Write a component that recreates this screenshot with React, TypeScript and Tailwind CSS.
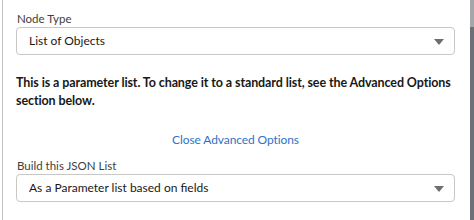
import { ReactNode } from "react";

const font = { fontFamily: 'Lato, "Segoe UI", sans-serif' };

function Select({ value }: { value: string }) {
  return (
    <div className="flex h-[28px] items-center justify-between rounded-[4px] border border-[#c9c7c5] bg-white pl-[12px] pr-[10px] text-[12px] text-[#181818]">
      <span>{value}</span>
      <svg width="10" height="6" viewBox="0 0 10 6" className="mt-[1px]">
        <path d="M0 0h10L5 6z" fill="#706e6b" />
      </svg>
    </div>
  );
}

function Field({ label, children }: { label: string; children: ReactNode }) {
  return (
    <div>
      <div className="h-[16px] pl-[1px] text-[11.5px] leading-[16px] text-[#3e3e3c]">{label}</div>
      <div>{children}</div>
    </div>
  );
}

export default function App() {
  return (
    <div className="flex h-[220px] w-[474px] overflow-hidden bg-white" style={font}>
      <div className="w-[2px] bg-white" />
      <div className="w-[1px] bg-[#c4c4c4]" />
      <div className="flex-1 pl-[13px] pr-[15px] pt-[11px]">
        <Field label="Node Type">
          <Select value="List of Objects" />
        </Field>

        <p className="mt-[19px] text-[12.5px] font-bold leading-[18px] tracking-[-0.1px] text-[#181818]">
          This is a parameter list. To change it to a standard list, see the Advanced Options section below.
        </p>

        <div className="mt-[22px] text-center text-[12px] leading-[16px] tracking-[-0.1px] text-[#2f72c8]">
          Close Advanced Options
        </div>

        <div className="mt-[10px]">
          <Field label="Build this JSON List">
            <Select value="As a Parameter list based on fields" />
          </Field>
        </div>
      </div>
      <div className="flex w-[4px] flex-col">
        <div className="h-[27px] bg-[#a3a6aa]" />
        <div className="flex-1 bg-[#6c7177]" />
      </div>
    </div>
  );
}
